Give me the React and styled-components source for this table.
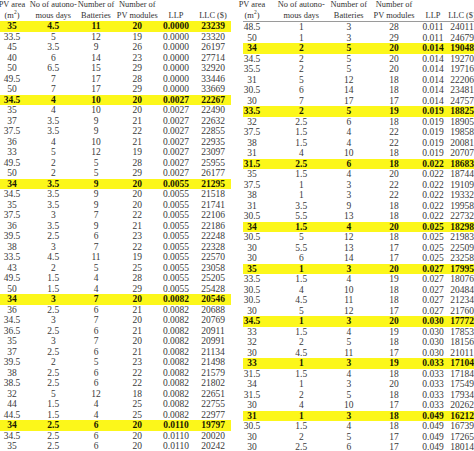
import React from 'react';
import styled, { createGlobalStyle } from 'styled-components';

const GlobalStyle = createGlobalStyle`
  html, body {
    margin: 0;
    padding: 0;
    background: #ffffff;
  }
  body {
    width: 474px;
    height: 451px;
    overflow: hidden;
    font-family: "Liberation Serif", "Times New Roman", serif;
    color: #2b2b2b;
  }
`;

const Page = styled.div`
  display: flex;
  gap: 12px;
  margin-left: -8px;
`;

const Table = styled.div`
  display: grid;
  grid-template-columns: ${(props) => props.cols};
  align-content: start;
`;

const Head = styled.div`
  display: contents;
`;

const HeadCell = styled.div`
  display: flex;
  flex-direction: column;
  align-items: center;
  justify-content: flex-end;
  height: 21px;
  padding-right: ${(props) => props.pad || 0}px;
  font-size: 8.4px;
  line-height: 10.5px;
  white-space: nowrap;
  color: #333;
  border-bottom: ${(props) => (props.rule ? '1px solid #9a9a9a' : 'none')};
`;

const Row = styled.div`
  display: contents;
`;

const Cell = styled.div`
  display: flex;
  justify-content: center;
  height: 10.5px;
  padding-right: ${(props) => props.pad || 0}px;
  font-size: 9.5px;
  line-height: 10.5px;
  white-space: nowrap;
  font-weight: ${(props) => (props.hl ? 700 : 400)};
  color: ${(props) => (props.hl ? '#1a1a00' : '#3a3a3a')};
  background: ${(props) => (props.hl ? '#fcf71a' : 'transparent')};
`;

const Sup = styled.sup`
  font-size: 5.5px;
  line-height: 0;
`;

const headers = [
  ['PV area', <>(m<Sup>2</Sup>)</>],
  ['No of autono-', 'mous days'],
  ['Number of', 'Batteries'],
  ['Number of', 'PV modules'],
  [null, 'LLP'],
  [null, 'LLC ($)'],
];

const leftRows = `
*35 4.5 11 20 0.0000 23239
33.5 5 12 19 0.0000 23320
45 3.5 9 26 0.0000 26197
40 6 14 23 0.0000 27714
50 6.5 15 29 0.0000 32920
49.5 7 17 28 0.0000 33446
50 7 17 29 0.0000 33669
*34.5 4 10 20 0.0027 22267
35 4 10 20 0.0027 22490
37 3.5 9 21 0.0027 22632
37.5 3.5 9 22 0.0027 22855
36 4 10 21 0.0027 22935
33 5 12 19 0.0027 23097
49.5 2 5 28 0.0027 25955
50 2 5 29 0.0027 26177
*34 3.5 9 20 0.0055 21295
34.5 3.5 9 20 0.0055 21518
35 3.5 9 20 0.0055 21741
37.5 3 7 22 0.0055 22106
36 3.5 9 21 0.0055 22186
39.5 2.5 6 23 0.0055 22248
38 3 7 22 0.0055 22328
33.5 4.5 11 19 0.0055 22570
43 2 5 25 0.0055 23058
49.5 1.5 4 28 0.0055 25205
50 1.5 4 29 0.0055 25428
*34 3 7 20 0.0082 20546
36 2.5 6 21 0.0082 20688
34.5 3 7 20 0.0082 20769
36.5 2.5 6 21 0.0082 20911
35 3 7 20 0.0082 20991
37 2.5 6 21 0.0082 21134
39.5 2 5 23 0.0082 21498
38 2.5 6 22 0.0082 21579
38.5 2.5 6 22 0.0082 21802
32 5 12 18 0.0082 22651
44 1.5 4 25 0.0082 22755
44.5 1.5 4 25 0.0082 22977
*34 2.5 6 20 0.0110 19797
34.5 2.5 6 20 0.0110 20020
35 2.5 6 20 0.0110 20242
`;

const rightRows = `
48.5 1 3 28 0.011 24011
50 1 3 29 0.011 24679
*34 2 5 20 0.014 19048
34.5 2 5 20 0.014 19270
35.5 2 5 20 0.014 19716
31 5 12 18 0.014 22206
30.5 6 14 18 0.014 23481
30 7 17 17 0.014 24757
*33.5 2 5 19 0.019 18825
32 2.5 6 18 0.019 18905
37.5 1.5 4 22 0.019 19858
38 1.5 4 22 0.019 20081
31 4 10 18 0.019 20707
*31.5 2.5 6 18 0.022 18683
35 1.5 4 20 0.022 18744
37.5 1 3 22 0.022 19109
38 1 3 22 0.022 19332
31 3.5 9 18 0.022 19958
30.5 5.5 13 18 0.022 22732
*34 1.5 4 20 0.025 18298
30.5 5 12 18 0.025 21983
30 5.5 13 17 0.025 22509
30 6 14 17 0.025 23258
*35 1 3 20 0.027 17995
33.5 1.5 4 19 0.027 18076
30.5 4 10 18 0.027 20484
30.5 4.5 11 18 0.027 21234
30 5 12 17 0.027 21760
*34.5 1 3 20 0.030 17772
33 1.5 4 19 0.030 17853
32 2 5 18 0.030 18156
30 4.5 11 17 0.030 21011
*33 1 3 19 0.033 17104
31.5 1.5 4 18 0.033 17184
34 1 3 20 0.033 17549
31.5 2 5 18 0.033 17934
30 4 10 17 0.033 20262
*31 1 3 18 0.049 16212
30.5 1.5 4 18 0.049 16739
30 2 5 17 0.049 17265
30 2.5 6 17 0.049 18014
`;

const parse = (text) =>
  text
    .trim()
    .split('\n')
    .map((line) => {
      const hl = line.startsWith('*');
      return { hl, cells: line.replace('*', '').split(' ') };
    });

const DataTable = ({ cols, rows, firstPad, rule }) => (
  <Table cols={cols}>
    <Head>
      {headers.map(([a, b], i) => (
        <HeadCell key={i} rule={rule} pad={i === 0 ? firstPad : 0}>
          {a && <span>{a}</span>}
          <span>{b}</span>
        </HeadCell>
      ))}
    </Head>
    {parse(rows).map((row, r) => (
      <Row key={r}>
        {row.cells.map((c, i) => (
          <Cell key={i} hl={row.hl} pad={i === 0 ? firstPad : 0}>
            {c}
          </Cell>
        ))}
      </Row>
    ))}
  </Table>
);

export default function App() {
  return (
    <>
      <GlobalStyle />
      <Page>
        <DataTable
          cols="40px 42.5px 43px 39.5px 38px 36px"
          rows={leftRows}
          firstPad={0}
        />
        <DataTable
          cols="34px 48.5px 46.5px 44px 34px 24px"
          rows={rightRows}
          firstPad={16}
          rule
        />
      </Page>
    </>
  );
}
